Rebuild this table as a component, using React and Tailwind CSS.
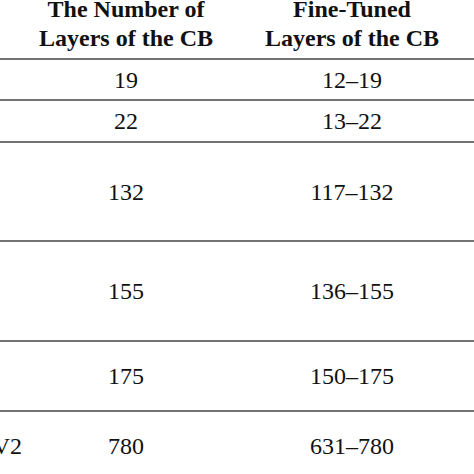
const rows = [
  { name: "VGG19", layers: "19", tuned: "12–19", h: "h-[41px]" },
  { name: "GoogLeNet", layers: "22", tuned: "13–22", h: "h-[42px]" },
  { name: "DenseNet", layers: "132", tuned: "117–132", h: "h-[99px]" },
  { name: "ResNet", layers: "155", tuned: "136–155", h: "h-[100px]" },
  { name: "Xception", layers: "175", tuned: "150–175", h: "h-[70px]" },
  { name: "InceptionResNetV2", layers: "780", tuned: "631–780", h: "h-[68px]" },
];

function Row({ row, last }) {
  return (
    <div
      className={`flex ${row.h} ${last ? "" : "border-b-2 border-[#727272]"}`}
    >
      <div className="w-[22px] shrink-0 flex items-center justify-end whitespace-nowrap">
        {last ? row.name : ""}
      </div>
      <div className="w-[208px] shrink-0 flex items-center justify-center">
        {row.layers}
      </div>
      <div className="flex-1 flex items-center justify-center">{row.tuned}</div>
    </div>
  );
}

export default function App() {
  return (
    <div
      className="w-[474px] h-[474px] overflow-hidden bg-white text-[#111] text-[24px] leading-none"
      style={{ fontFamily: '"Liberation Serif", "DejaVu Serif", serif' }}
    >
      <div className="flex h-[60px] pb-[10px] border-b-2 border-[#727272] font-bold leading-[29px]">
        <div className="w-[22px] shrink-0" />
        <div className="w-[208px] shrink-0 flex items-center justify-center text-center">
          <div className="whitespace-nowrap">
            The Number of
            <br />
            Layers of the CB
          </div>
        </div>
        <div className="flex-1 flex items-center justify-center text-center">
          <div className="whitespace-nowrap">
            Fine-Tuned
            <br />
            Layers of the CB
          </div>
        </div>
      </div>
      {rows.map((r, i) => (
        <Row key={r.name} row={r} last={i === rows.length - 1} />
      ))}
    </div>
  );
}
